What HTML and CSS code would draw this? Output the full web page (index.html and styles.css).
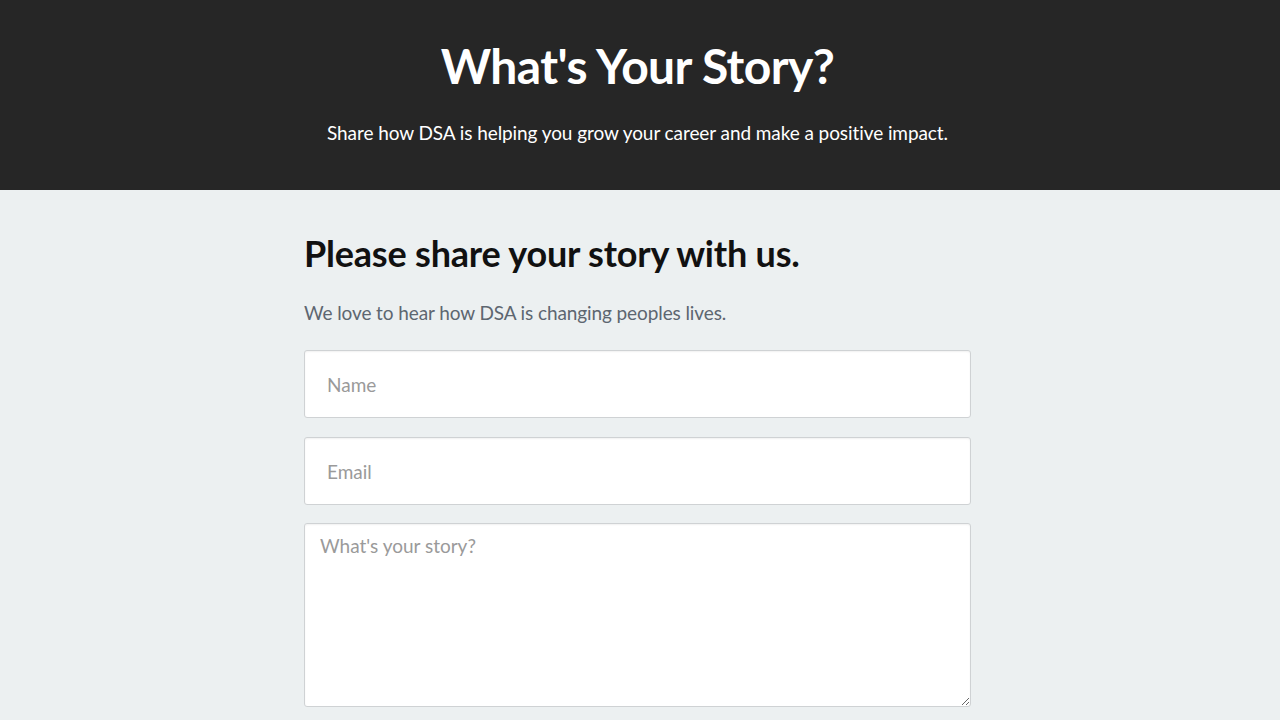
FILE: index.html
```html
<!DOCTYPE html>
<html lang="en">
<head>
<meta charset="utf-8">
<title>What's Your Story?</title>
<link rel="stylesheet" href="styles.css">
</head>
<body>
<header class="hero">
  <h1 class="hero-title">What's Your Story?</h1>
  <p class="hero-sub">Share how DSA is helping you grow your career and make a positive impact.</p>
</header>
<main class="content">
  <section class="story">
    <h2 class="story-title">Please share your story with us.</h2>
    <p class="story-lead">We love to hear how DSA is changing peoples lives.</p>
    <form class="story-form">
      <input class="field" type="text" placeholder="Name">
      <input class="field" type="email" placeholder="Email">
      <textarea class="field field-area" placeholder="What's your story?"></textarea>
    </form>
  </section>
</main>
</body>
</html>
```
FILE: styles.css
```css
* { box-sizing: border-box; }
html, body { margin: 0; padding: 0; }
body {
  background: #ecf0f1;
  font-family: Lato, "Open Sans", sans-serif;
  color: #111;
  height: 720px;
  overflow: hidden;
}
.hero {
  background: #262626;
  color: #fff;
  height: 190px;
  text-align: center;
  padding: 36px 5px 0 0;
}
.hero-title {
  margin: 0;
  font-size: 48px;
  font-weight: 700;
  line-height: 60px;
  letter-spacing: -0.6px;
}
.hero-sub {
  margin: 24px 0 0;
  font-size: 19px;
  line-height: 26px;
  letter-spacing: -0.08px;
}
.content {
  display: flex;
  justify-content: center;
  padding-right: 5px;
}
.story {
  width: 667px;
  padding-top: 40px;
}
.story-title {
  margin: 0;
  font-size: 36px;
  line-height: 46px;
  font-weight: 700;
  letter-spacing: -0.2px;
}
.story-lead {
  margin: 24px 0 0;
  font-size: 19px;
  line-height: 26px;
  color: #5d6670;
  letter-spacing: -0.1px;
}
.story-form {
  margin-top: 24px;
  display: flex;
  flex-direction: column;
  gap: 19px;
}
.field {
  display: block;
  width: 100%;
  height: 68px;
  border: 1px solid #cfd2d4;
  border-radius: 3px;
  background: #fff;
  box-shadow: inset 0 1px 2px rgba(0,0,0,0.06);
  padding: 0 22px;
  font-family: Lato, "Open Sans", sans-serif;
  font-size: 19px;
  color: #333;
  outline: none;
}
.field::placeholder { color: #9a9a9a; }
.field-area {
  height: 184px;
  margin-top: -1px;
  padding: 10px 15px;
  resize: vertical;
  line-height: 24px;
}
```
